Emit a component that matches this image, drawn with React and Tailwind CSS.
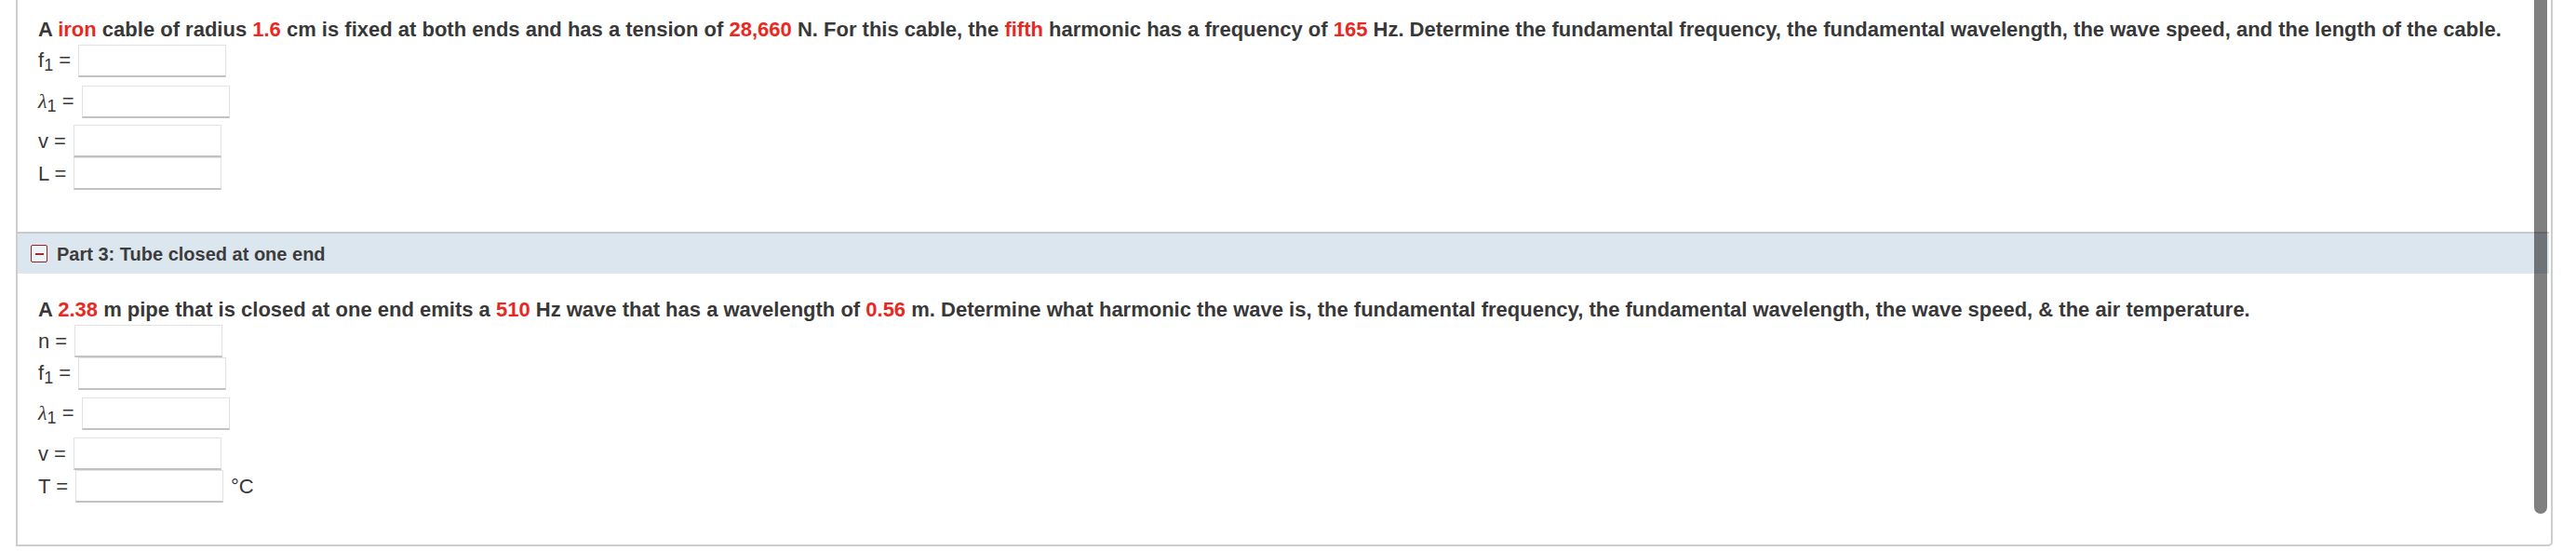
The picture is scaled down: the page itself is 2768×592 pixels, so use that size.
const R = ({ children }) => <span className="text-[#e8291f]">{children}</span>

function Field({ sym, sub, unit, className = '' }) {
  return (
    <div className={`flex items-center h-[35px] ${className}`}>
      <span className="whitespace-nowrap leading-[25px]">
        {sym === 'lambda'
          ? <span className="italic font-['Liberation_Serif',serif]">λ</span>
          : sym}
        {sub && <span className="relative top-[4px] text-[18px]">{sub}</span>}
        {' ='}
      </span>
      <input
        type="text"
        className="ml-2 w-[159px] h-[35px] bg-white border border-[#e2e2e2] border-b-2 border-b-[#c2c2c2] outline-none"
      />
      {unit && <span className="ml-2">{unit}</span>}
    </div>
  )
}

export default function App() {
  return (
    <div className="w-[2768px] h-[592px] bg-white font-['Liberation_Sans',Arial,sans-serif] text-[22px] text-[#383838]">
      <div className="relative ml-[17px] w-[2726px] border-x-2 border-b-2 border-[#cdcdcd] rounded-br-[5px]">
        {/* Part 2 (tail) */}
        <section className="pl-[22px] pt-[19px] pb-[45px]">
          <p className="font-bold leading-[25px] whitespace-nowrap">
            A <R>iron</R> cable of radius <R>1.6</R> cm is fixed at both ends and has a tension of <R>28,660</R> N. For this cable, the <R>fifth</R> harmonic has a frequency of <R>165</R> Hz. Determine the fundamental frequency, the fundamental wavelength, the wave speed, and the length of the cable.
          </p>
          <div className="mt-[4px]">
            <Field sym="f" sub="1" className="mb-[9px]" />
            <Field sym="lambda" sub="1" className="mb-[7px]" />
            <Field sym="v" />
            <Field sym="L" />
          </div>
        </section>

        {/* Part 3 header */}
        <div className="mr-[2px] h-[45px] border-t-2 border-[#c9c9c9] bg-[#dce6ef] flex items-center pl-[14px] gap-[10px]">
          <div className="w-[18px] h-[19px] rounded-[2px] border-[1.5px] border-[#8e2424] bg-[#eef3f7] flex items-center justify-center">
            <div className="w-[9px] h-[2px] bg-[#a52a2a]" />
          </div>
          <span className="font-bold text-[20px] text-[#3c3c3c]">Part 3: Tube closed at one end</span>
        </div>

        <section className="pl-[22px] pt-[26px] pb-[45px]">
          <p className="font-bold leading-[25px] whitespace-nowrap">
            A <R>2.38</R> m pipe that is closed at one end emits a <R>510</R> Hz wave that has a wavelength of <R>0.56</R> m. Determine what harmonic the wave is, the fundamental frequency, the fundamental wavelength, the wave speed, &amp; the air temperature.
          </p>
          <div className="mt-[4px]">
            <Field sym="n" />
            <Field sym="f" sub="1" className="mb-[8px]" />
            <Field sym="lambda" sub="1" className="mb-[8px]" />
            <Field sym="v" />
            <Field sym="T" unit="°C" />
          </div>
        </section>

        {/* overlay scrollbar thumb */}
        <div className="absolute right-[4px] top-0 w-[14px] h-[552px] rounded-b-[7px] bg-black/50" />
      </div>
    </div>
  )
}
